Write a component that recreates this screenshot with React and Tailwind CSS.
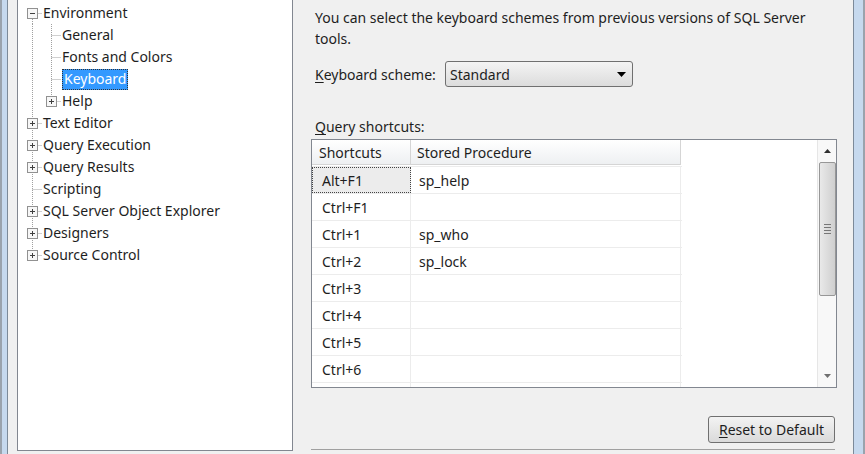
import React from 'react';

const TREE = [
  { label: 'Environment', level: 0, box: 'minus', first: true },
  { label: 'General', level: 1 },
  { label: 'Fonts and Colors', level: 1 },
  { label: 'Keyboard', level: 1, selected: true },
  { label: 'Help', level: 1, box: 'plus', lastChild: true },
  { label: 'Text Editor', level: 0, box: 'plus' },
  { label: 'Query Execution', level: 0, box: 'plus' },
  { label: 'Query Results', level: 0, box: 'plus' },
  { label: 'Scripting', level: 0 },
  { label: 'SQL Server Object Explorer', level: 0, box: 'plus' },
  { label: 'Designers', level: 0, box: 'plus' },
  { label: 'Source Control', level: 0, box: 'plus', last: true },
];

const ROWS = [
  ['Alt+F1', 'sp_help'],
  ['Ctrl+F1', ''],
  ['Ctrl+1', 'sp_who'],
  ['Ctrl+2', 'sp_lock'],
  ['Ctrl+3', ''],
  ['Ctrl+4', ''],
  ['Ctrl+5', ''],
  ['Ctrl+6', ''],
  ['', ''],
];

const DOT = { stroke: '#a0a0a0', strokeWidth: 1, strokeDasharray: '1 1' };

// connector drawing for one tree row (22px high)
const Connector = ({ item }) => {
  const w = item.level === 0 ? 25 : 44;
  const x0 = 14.5;
  const x1 = 33.5;
  return (
    <svg width={w} height="22" className="shrink-0">
      {/* level-0 spine */}
      <line x1={x0} y1={item.first ? 11 : 0} x2={x0} y2={item.last ? 11 : 22} {...DOT} />
      {item.level === 0 && <line x1={x0} y1="11.5" x2="24" y2="11.5" {...DOT} />}
      {item.level === 1 && (
        <>
          <line x1={x1} y1="0" x2={x1} y2={item.lastChild ? 11 : 22} {...DOT} />
          <line x1={x1} y1="11.5" x2="43" y2="11.5" {...DOT} />
        </>
      )}
      {item.box && (
        <g transform={`translate(${item.level === 0 ? 9 : 28} 6)`}>
          <rect x="0.5" y="0.5" width="10" height="10" fill="#f7f7f7" stroke="#919191" />
          <line x1="3" y1="5.5" x2="8" y2="5.5" stroke="#404040" />
          {item.box === 'plus' && <line x1="5.5" y1="3" x2="5.5" y2="8" stroke="#404040" />}
        </g>
      )}
    </svg>
  );
};

const Tri = ({ down = true, color = '#000', w = 9, h = 5 }) => (
  <svg width={w} height={h}>
    <polygon points={down ? `0,0 ${w},0 ${w / 2},${h}` : `0,${h} ${w},${h} ${w / 2},0`} fill={color} />
  </svg>
);

export default function App() {
  return (
    <div
      className="w-[865px] h-[454px] flex bg-[#f0f0f0] overflow-hidden text-[14px] text-[#1e1e1e]"
      style={{ fontFamily: '"Noto Sans", "Open Sans", sans-serif' }}
    >
      {/* left window frame */}
      <div className="flex shrink-0">
        <div className="w-[2px] bg-[#9aa3ad]" />
        <div className="w-[5px] bg-[#c6d9ee]" />
        <div className="w-[1px] bg-[#7c8a99]" />
      </div>

      {/* tree */}
      <div className="ml-[9px] w-[276px] h-[451px] shrink-0 bg-white border-l border-r border-b border-[#828790] pt-[2px]">
        {TREE.map((item) => (
          <div key={item.label} className="flex h-[22px] items-center">
            <Connector item={item} />
            <span
              className={
                item.selected
                  ? 'h-[21px] leading-[20px] px-[2px] bg-[#3399ff] text-white outline outline-1 outline-dotted outline-[#333] -outline-offset-1'
                  : 'leading-[22px] whitespace-nowrap'
              }
            >
              {item.label}
            </span>
          </div>
        ))}
      </div>

      {/* right content */}
      <div className="flex-1 pl-[18px] pr-[16px] flex flex-col">
        <p className="mt-[7px] pl-[4px] leading-[21px]">
          You can select the keyboard schemes from previous versions of SQL Server
          <br />
          tools.
        </p>

        <div className="mt-[12px] pl-[4px] flex items-center h-[26px]">
          <span className="w-[130px] shrink-0">
            <span className="underline underline-offset-2">K</span>eyboard scheme:
          </span>
          <div className="w-[188px] h-[26px] rounded-[3px] border border-[#707070] bg-gradient-to-b from-[#f4f4f4] to-[#dcdcdc] flex items-center justify-between pl-[4px] pr-[6px]">
            <span>Standard</span>
            <Tri w={9} h={5} />
          </div>
        </div>

        <div className="mt-[29px] pl-[4px] leading-[21px]">
          <span className="underline underline-offset-2">Q</span>uery shortcuts:
        </div>

        {/* grid */}
        <div className="mt-[2px] h-[249px] border border-[#828790] bg-white flex overflow-hidden">
          <div className="flex-1 flex flex-col">
            <div className="flex h-[25px] shrink-0">
              <div className="w-[99px] pl-[7px] flex items-center border-r border-b border-[#d5d5d5] bg-gradient-to-b from-white to-[#eef0f2]">
                Shortcuts
              </div>
              <div className="w-[270px] pl-[6px] flex items-center border-r border-b border-[#d5d5d5] bg-gradient-to-b from-white to-[#eef0f2]">
                Stored Procedure
              </div>
            </div>
            <div className="mt-[1px]">
              {ROWS.map(([k, p], i) => (
                <div key={i} className="flex h-[27px] border-t border-[#ececec] w-[370px]">
                  <div
                    className={`w-[99px] pl-[10px] flex items-center border-r border-[#ececec] ${
                      i === 0 ? 'bg-[#ececec] outline outline-1 outline-dotted outline-[#444] -outline-offset-1' : ''
                    }`}
                  >
                    {k}
                  </div>
                  <div className="w-[270px] pl-[8px] flex items-center border-r border-[#ececec]">{p}</div>
                </div>
              ))}
            </div>
          </div>

          {/* scrollbar */}
          <div className="w-[19px] shrink-0 bg-[#f8f8f8] border-l border-[#e6e6e6] flex flex-col items-center">
            <div className="h-[22px] flex items-center justify-center">
              <Tri down={false} w={7} h={4} color="#303030" />
            </div>
            <div className="w-[17px] h-[134px] rounded-[2px] border border-[#979797] bg-gradient-to-r from-[#e9e9e9] via-[#dcdcdc] to-[#cfcfcf] flex flex-col items-center justify-center gap-[2px]">
              <div className="w-[7px] h-[1px] bg-[#777]" />
              <div className="w-[7px] h-[1px] bg-[#777]" />
              <div className="w-[7px] h-[1px] bg-[#777]" />
              <div className="w-[7px] h-[1px] bg-[#777]" />
            </div>
            <div className="flex-1" />
            <div className="h-[22px] flex items-center justify-center">
              <Tri w={7} h={4} color="#707070" />
            </div>
          </div>
        </div>

        <div className="mt-[28px] flex justify-end pr-[2px]">
          <button className="w-[127px] h-[27px] rounded-[3px] border border-[#707070] bg-gradient-to-b from-[#f3f3f3] to-[#dadada] text-[#1e1e1e]">
            <span className="underline underline-offset-2">R</span>eset to Default
          </button>
        </div>

        <div className="mt-[6px] mr-[2px] h-[1px] bg-[#a0a0a0]" />
      </div>

      {/* right window frame */}
      <div className="flex shrink-0">
        <div className="w-[1px] bg-[#7c8a99]" />
        <div className="w-[9px] bg-[#c6d9ee]" />
        <div className="w-[2px] bg-[#9aa3ad]" />
      </div>
    </div>
  );
}
